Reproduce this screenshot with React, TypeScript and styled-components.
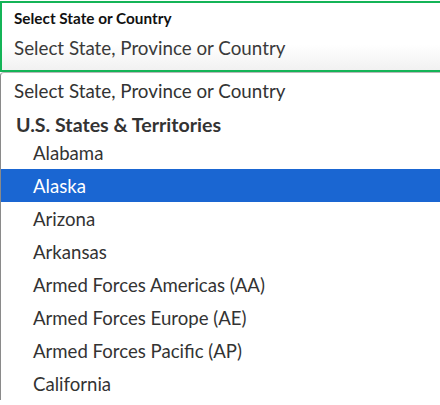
import React from "react";
import styled, { createGlobalStyle } from "styled-components";

const Global = createGlobalStyle`
  html, body { margin: 0; padding: 0; background: #fff; }
  body { font-family: Lato, "Open Sans", sans-serif; overflow: hidden; }
`;

const Page = styled.div`
  width: 440px;
  height: 405px;
  overflow: hidden;
  padding-top: 1px;
  box-sizing: border-box;
`;

const Field = styled.div`
  width: 470px;
  height: 71px;
  box-sizing: border-box;
  border: 2px solid #14b457;
  background: linear-gradient(to bottom, #ffffff 62%, #f1f1f1 100%);
  padding: 6px 0 0 12px;
`;

const Label = styled.div`
  font-weight: 700;
  font-size: 15.3px;
  line-height: 19px;
  color: #111;
`;

const Placeholder = styled.div`
  margin-top: 8px;
  font-size: 18.8px;
  line-height: 23px;
  color: #3a3a3a;
`;

const List = styled.div`
  width: 470px;
  box-sizing: border-box;
  border-top: 1px solid #b8b8b8;
  border-left: 1px solid #8a8a8a;
  border-top-left-radius: 4px;
  background: #fff;
`;

const Option = styled.div<{ $indent?: boolean; $active?: boolean }>`
  height: 33px;
  box-sizing: border-box;
  padding-top: 2px;
  line-height: 31px;
  font-size: ${(p) => (p.$indent ? "18.6px" : "18.8px")};
  padding-left: ${(p) => (p.$indent ? "32px" : "13px")};
  color: ${(p) => (p.$active ? "#fff" : "#333")};
  background: ${(p) => (p.$active ? "#1a66d2" : "transparent")};
  white-space: nowrap;
`;

const Group = styled.div`
  height: 30px;
  box-sizing: border-box;
  padding: 7px 0 0 15px;
  line-height: 23px;
  font-size: 19.6px;
  font-weight: 700;
  color: #333;
`;

const states = [
  "Alabama",
  "Alaska",
  "Arizona",
  "Arkansas",
  "Armed Forces Americas (AA)",
  "Armed Forces Europe (AE)",
  "Armed Forces Pacific (AP)",
  "California",
];

export default function App() {
  return (
    <Page>
      <Global />
      <Field>
        <Label>Select State or Country</Label>
        <Placeholder>Select State, Province or Country</Placeholder>
      </Field>
      <List>
        <Option>Select State, Province or Country</Option>
        <Group>U.S. States &amp; Territories</Group>
        {states.map((s) => (
          <Option key={s} $indent $active={s === "Alaska"}>
            {s}
          </Option>
        ))}
      </List>
    </Page>
  );
}
